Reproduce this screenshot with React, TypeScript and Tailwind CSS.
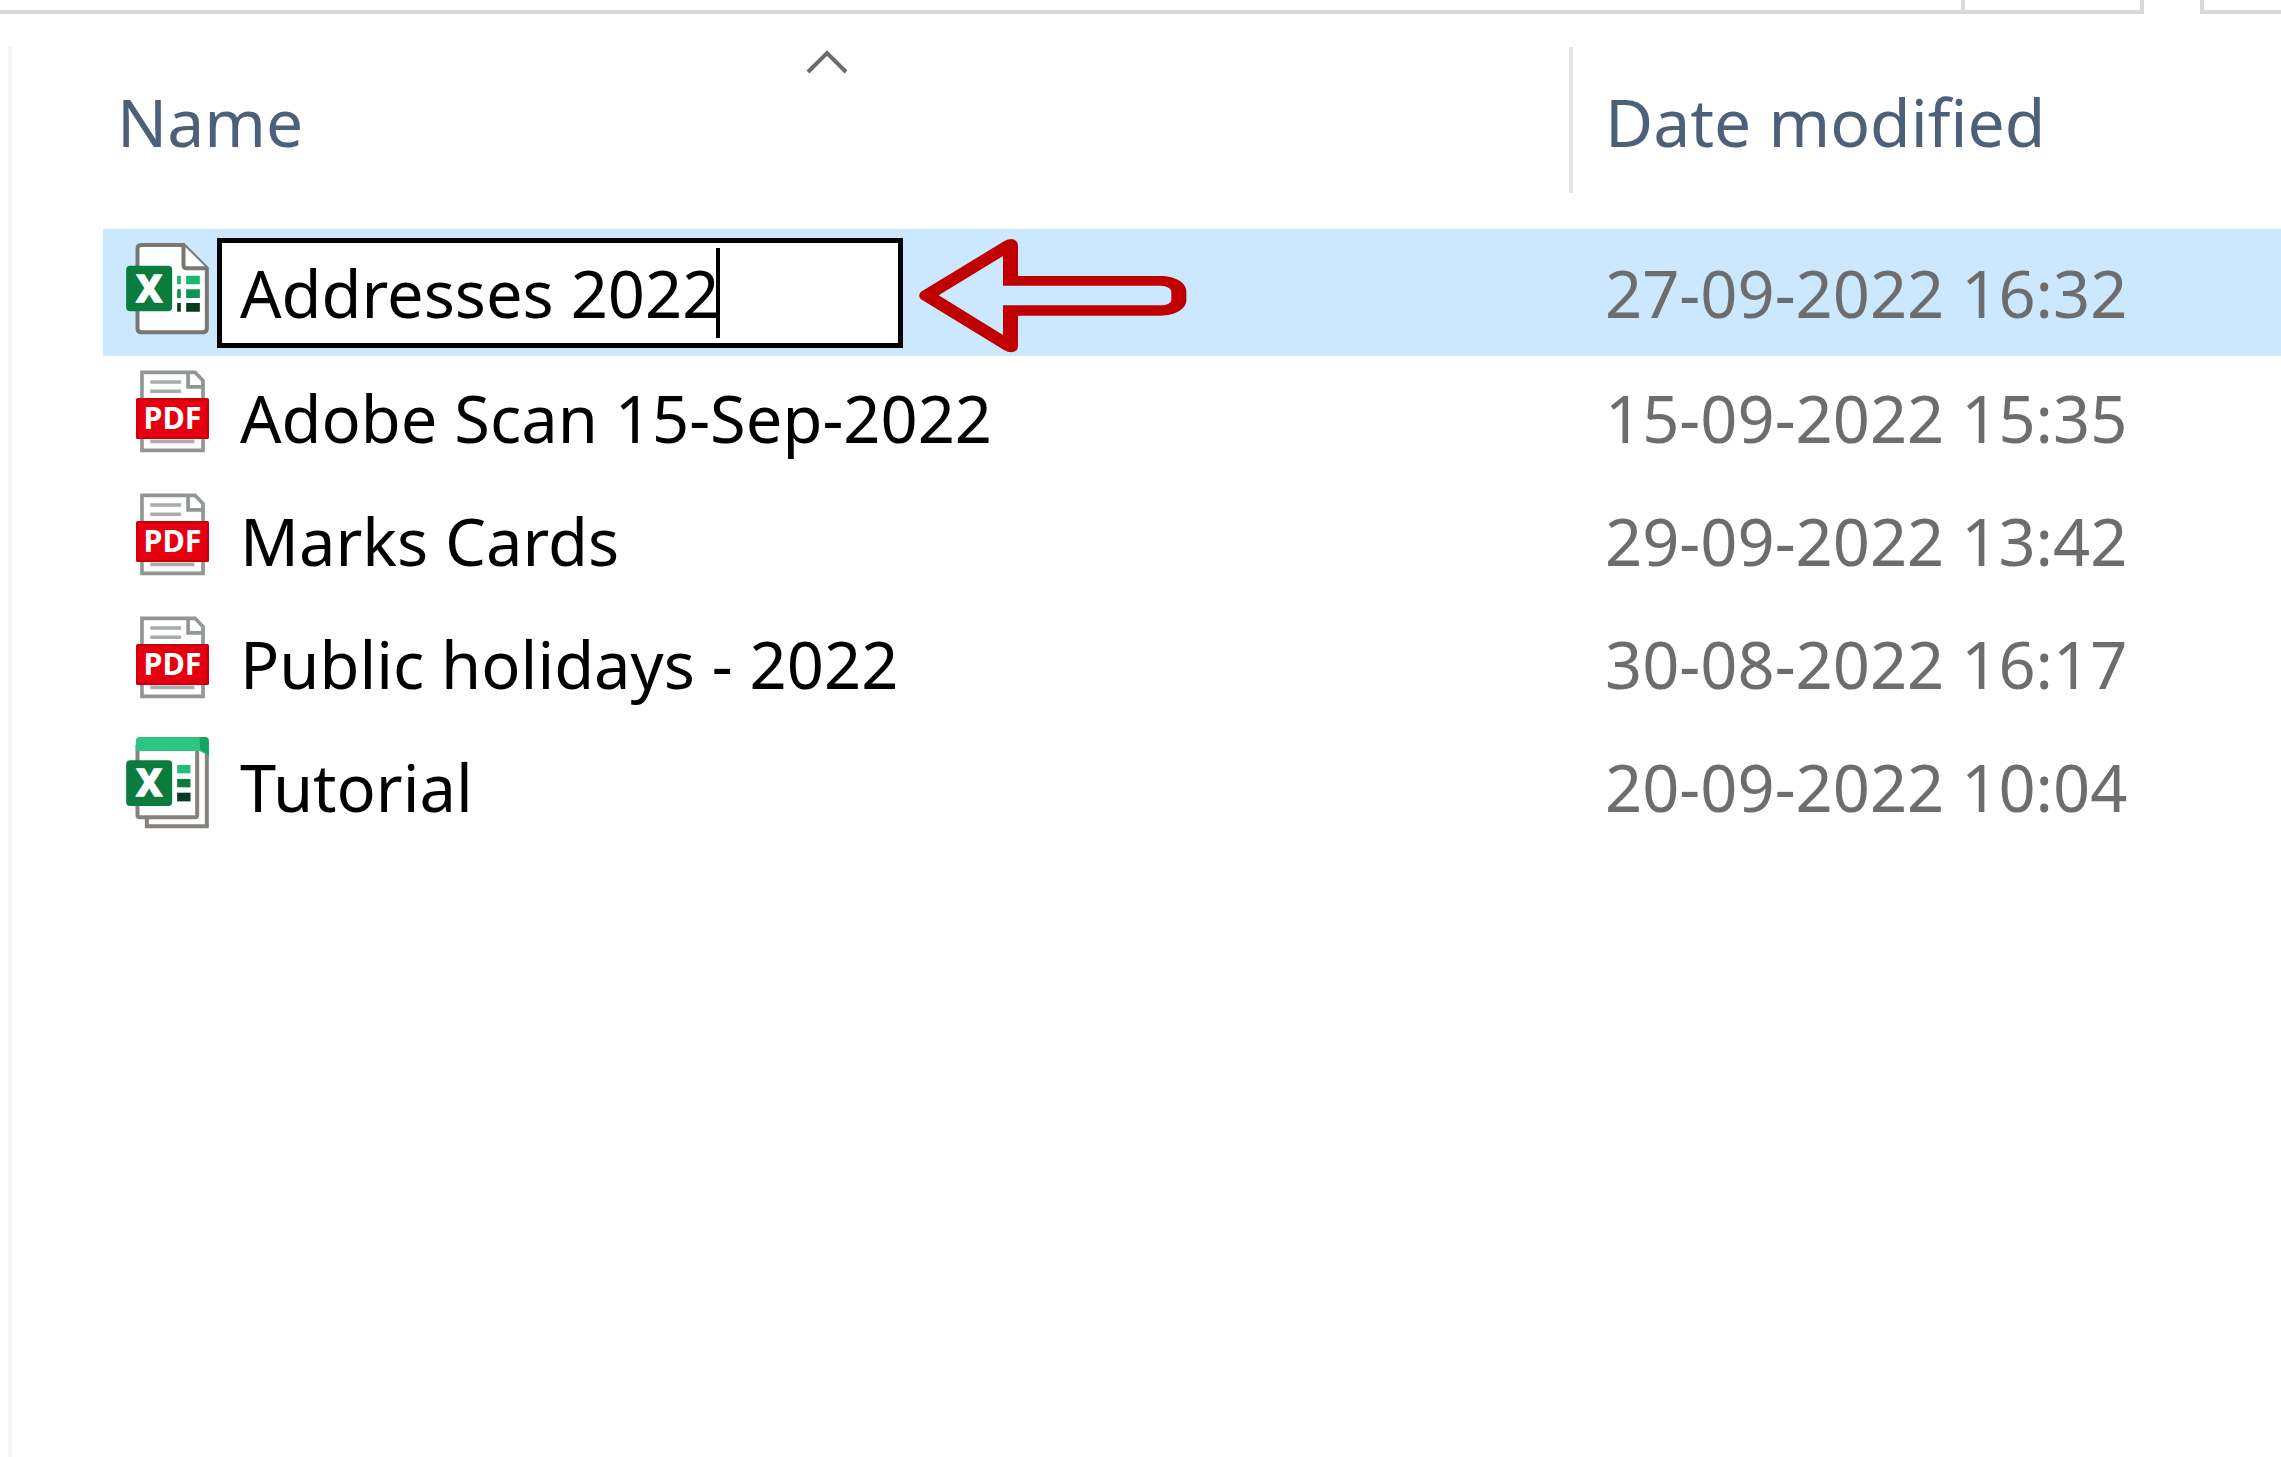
import { useState } from "react";

type FileKind = "sheet" | "workbook" | "pdf";

type FileRow = {
  name: string;
  kind: FileKind;
  modified: string;
};

const FILES: FileRow[] = [
  { name: "Addresses 2022", kind: "sheet", modified: "27-09-2022 16:32" },
  { name: "Adobe Scan 15-Sep-2022", kind: "pdf", modified: "15-09-2022 15:35" },
  { name: "Marks Cards", kind: "pdf", modified: "29-09-2022 13:42" },
  { name: "Public holidays - 2022", kind: "pdf", modified: "30-08-2022 16:17" },
  { name: "Tutorial", kind: "workbook", modified: "20-09-2022 10:04" },
];

function ExcelBadge({ y }: { y: number }) {
  return (
    <>
      <rect x="0" y={y} width="138" height="137" rx="12" fill="#0b7c3e" />
      <text
        x="69"
        y={y + 108}
        textAnchor="middle"
        fontSize="112"
        fontWeight="800"
        fill="#fff"
        stroke="#fff"
        strokeWidth="4"
        className="font-['Noto_Sans',sans-serif]"
      >
        X
      </text>
    </>
  );
}

function SheetIcon() {
  return (
    <svg viewBox="0 0 248 276" className="h-[92px] w-[83px]" aria-hidden="true">
      <path
        d="M44 6H172L242 76V256Q242 268 230 268H46Q34 268 34 256V18Q34 6 44 6Z"
        fill="#fff"
        stroke="#7a7672"
        strokeWidth="12"
      />
      <path d="M172 6V66Q172 76 182 76H242" fill="#fff" stroke="#7a7672" strokeWidth="12" />
      <path d="M153 98h11v26h-11zM180 98h41v26h-41z" fill="#18b873" />
      <path d="M153 139h11v26h-11zM180 139h41v26h-41z" fill="#0c9251" />
      <path d="M153 180h11v26h-11zM180 180h41v26h-41z" fill="#073c20" />
      <ExcelBadge y={68} />
    </svg>
  );
}

function WorkbookIcon() {
  return (
    <svg viewBox="0 0 248 276" className="h-[92px] w-[83px]" aria-hidden="true">
      <path d="M62 30H242V268H62Z" fill="#fff" stroke="#85827f" strokeWidth="12" />
      <path d="M34 30H213V234Q213 241 206 241H41Q34 241 34 234Z" fill="#fff" stroke="#85827f" strokeWidth="12" />
      <path d="M29 12Q29 0 41 0H236Q248 0 248 12V56L220 42H29Z" fill="#2dc580" />
      <path d="M220 0H236Q248 0 248 12V56L222 36Z" fill="#17a463" />
      <path d="M153 84h40v25h-40z" fill="#22bd78" />
      <path d="M153 126h40v25h-40z" fill="#0b7c3e" />
      <path d="M153 167h40v26h-40z" fill="#073c20" />
      <ExcelBadge y={70} />
    </svg>
  );
}

function PdfIcon() {
  return (
    <svg viewBox="0 0 220 250" className="mb-1 h-[83px] w-[73px]" aria-hidden="true">
      <path d="M18 7H178L202 32V242H18Z" fill="#fff" stroke="#929696" strokeWidth="11" />
      <path d="M157 7V51H202" fill="#fff" stroke="#929696" strokeWidth="11" />
      <path d="M43 36H136M43 64H136M43 215H176" stroke="#a9acac" strokeWidth="11" />
      <rect x="0" y="84" width="220" height="124" rx="5" fill="#c8000f" />
      <rect x="7" y="91" width="206" height="110" fill="#e6000f" />
      <text
        x="110"
        y="179"
        textAnchor="middle"
        fontSize="92"
        fontWeight="700"
        fill="#fff"
        className="font-['Noto_Sans',sans-serif]"
      >
        PDF
      </text>
    </svg>
  );
}

function FileIcon({ kind }: { kind: FileKind }) {
  return (
    <span className="flex w-[83px] shrink-0 justify-end pb-2">
      {kind === "sheet" && <SheetIcon />}
      {kind === "workbook" && <WorkbookIcon />}
      {kind === "pdf" && <PdfIcon />}
    </span>
  );
}

function PointerArrow() {
  return (
    <svg viewBox="0 0 804 342" className="ml-4 mt-1.5 h-[114px] w-[268px] shrink-0" aria-hidden="true">
      <path
        fill="#c00000"
        fillRule="evenodd"
        d="M6 158L255 7Q266 0 278 0Q297 3 297 20V111H724C770 111 802 132 802 156V184C802 209 770 230 724 230H297V322Q297 337 278 340Q266 340 255 333L6 181Q-5 170 6 158ZM59 169L252 51V140H724C745 140 757 149 757 159V182C757 191 745 199 724 199H252V288Z"
      />
    </svg>
  );
}

function RenameBox({ value, onChange }: { value: string; onChange: (value: string) => void }) {
  return (
    <div className="relative ml-2 w-[686px] shrink-0">
      <input
        type="text"
        aria-label="File name"
        value={value}
        onChange={(e) => onChange(e.target.value)}
        className="block h-[110px] w-full border-[5px] border-black bg-white pl-[18px] text-black caret-transparent outline-none"
      />
      <span className="absolute left-[499px] top-[10px] h-[90px] w-[4px] bg-black" />
    </div>
  );
}

export default function App() {
  const [draft, setDraft] = useState(FILES[0].name);

  return (
    <div className="flex min-h-screen flex-col overflow-hidden bg-white font-['Noto_Sans','Open_Sans',sans-serif] text-[65px] leading-[88px]">
      <div className="flex h-[14px] shrink-0">
        <div className="flex-1 border-b-4 border-[#d9d9d9]" />
        <div className="w-[183px] border-x-4 border-b-4 border-[#d9d9d9]" />
        <div className="ml-14 w-[81px] border-b-4 border-l-4 border-[#d9d9d9]" />
      </div>

      <main className="ml-2 mt-[33px] flex-1 border-l-4 border-[#f5f5f5] pl-[91px]">
        <table className="w-full table-fixed border-collapse text-left">
          <thead>
            <tr className="text-[66px] text-[#4c607a]">
              <th scope="col" aria-sort="ascending" className="w-[1470px] p-0 pb-9 font-normal">
                <button
                  type="button"
                  className="flex h-[146px] w-full flex-col border-r-4 border-[#e5e5e5] pl-3.5 text-left"
                >
                  <svg viewBox="0 0 44 28" className="mb-0.5 mr-8 h-7 w-11 self-center" aria-hidden="true">
                    <path d="M3 25L22 6L41 25" fill="none" stroke="#6b6b6b" strokeWidth="4" />
                  </svg>
                  <span>Name</span>
                </button>
              </th>
              <th scope="col" className="p-0 pb-9 font-normal">
                <button type="button" className="flex h-[146px] w-full items-start pl-8 pt-[30px] text-left">
                  Date modified
                </button>
              </th>
            </tr>
          </thead>
          <tbody>
            {FILES.map((file, index) => (
              <tr key={file.name} className={index === 0 ? "h-[127px] bg-[#cce8ff]" : "h-[123px]"}>
                <td className="p-0 pl-[23px]">
                  <div className="flex items-center">
                    <FileIcon kind={file.kind} />
                    {index === 0 ? (
                      <>
                        <RenameBox value={draft} onChange={setDraft} />
                        <PointerArrow />
                      </>
                    ) : (
                      <span className="ml-[31px] whitespace-nowrap text-black">{file.name}</span>
                    )}
                  </div>
                </td>
                <td className="whitespace-nowrap p-0 pl-8 text-[#6d6d6d]">{file.modified}</td>
              </tr>
            ))}
          </tbody>
        </table>
      </main>
    </div>
  );
}
